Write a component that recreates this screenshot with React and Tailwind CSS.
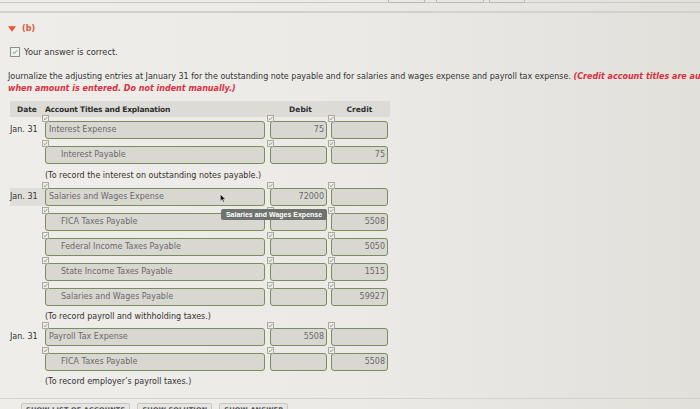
import React from "react";

const rows = [
  { kind: "entry", date: "Jan. 31", account: "Interest Expense", debit: "75" },
  { kind: "entry", account: "Interest Payable", indent: true, credit: "75" },
  { kind: "note", text: "(To record the interest on outstanding notes payable.)", h: "h-[17px]" },
  { kind: "entry", date: "Jan. 31", account: "Salaries and Wages Expense", debit: "72000", hl: true },
  { kind: "entry", account: "FICA Taxes Payable", indent: true, credit: "5508" },
  { kind: "entry", account: "Federal Income Taxes Payable", indent: true, credit: "5050" },
  { kind: "entry", account: "State Income Taxes Payable", indent: true, credit: "1515" },
  { kind: "entry", account: "Salaries and Wages Payable", indent: true, credit: "59927" },
  { kind: "note", text: "(To record payroll and withholding taxes.)", h: "h-[15px]" },
  { kind: "entry", date: "Jan. 31", account: "Payroll Tax Expense", debit: "5508" },
  { kind: "entry", account: "FICA Taxes Payable", indent: true, credit: "5508" },
  { kind: "note", text: "(To record employer\u2019s payroll taxes.)", h: "h-[15px]" },
];

function Tick({ className = "" }) {
  return (
    <span className={`absolute flex h-[7px] w-[7px] items-center justify-center border border-[#a9aba3] bg-[#ecece8] ${className}`}>
      <svg viewBox="0 0 8 8" className="h-[5px] w-[5px]">
        <path d="M1.2 4.2 L3.1 6 L6.8 1.8" fill="none" stroke="#7d8a6a" strokeWidth="1.3" />
      </svg>
    </span>
  );
}

function Field({ width, children, align = "left", indent }) {
  return (
    <div className={`relative h-[18px] ${width}`}>
      <Tick className="-left-[3px] -top-[6px]" />
      <div
        className={`flex h-full items-center rounded-[3px] border-[1.5px] border-[#7b8d5b] bg-[#d8d7d2] text-[#6a6a68] ${
          align === "right" ? "justify-end pr-[2px]" : indent ? "pl-[15px]" : "pl-[3px]"
        }`}
      >
        {children}
      </div>
    </div>
  );
}

export default function App() {
  return (
    <div className="h-[409px] w-[700px] overflow-hidden bg-gradient-to-r from-[#eeede9] via-[#ebeae6] to-[#e1e0db] font-['DejaVu_Sans',sans-serif] text-[8px] text-[#3a3a3a]">
      {/* top chrome */}
      <div className="flex h-[3px] border-b border-[#c9c8c3]">
        <div className="ml-[388px] h-[3px] w-[37px] rounded-b-[2px] border-x border-b border-[#b9b8b3]" />
        <div className="ml-[11px] h-[3px] w-[48px] rounded-b-[2px] border-x border-b border-[#b9b8b3]" />
        <div className="ml-[5px] h-[3px] w-[36px] rounded-b-[2px] border-x border-b border-[#b9b8b3]" />
      </div>
      <div className="h-[10px] border-b-2 border-[#d2d1cc]" />

      {/* part header */}
      <div className="mt-[10px] flex items-center gap-[6px] pl-[8px] text-[8px] font-bold text-[#e0553a]">
        <svg viewBox="0 0 10 7" className="h-[6px] w-[8px]">
          <path d="M0 0 L10 0 L5 7 Z" fill="#e8552f" />
        </svg>
        <span>(b)</span>
      </div>

      {/* correct notice */}
      <div className="mt-[11px] flex items-center gap-[4px] pl-[10px]">
        <span className="flex h-[10px] w-[10px] items-center justify-center border border-[#8d8d8a] bg-[#f2f2ef]">
          <svg viewBox="0 0 8 8" className="h-[6px] w-[6px]">
            <path d="M1.2 4.2 L3.1 6 L6.8 1.8" fill="none" stroke="#6f7d63" strokeWidth="1.2" />
          </svg>
        </span>
        <span className="text-[8.3px] text-[#333]">Your answer is correct.</span>
      </div>

      {/* instructions */}
      <div className="mt-[13px] pl-[8px] leading-[12px] text-[#333]">
        <div className="whitespace-nowrap">
          Journalize the adjusting entries at January 31 for the outstanding note payable and for salaries and wages expense and payroll tax
          expense.{" "}
          <span className="font-bold italic text-[#d8303f]">(Credit account titles are automatically indented</span>
        </div>
        <div className="whitespace-nowrap font-bold italic text-[#d8303f]">when amount is entered. Do not indent manually.)</div>
      </div>

      {/* journal table */}
      <div className="relative ml-[10px] mt-[6px] w-[380px]">
        <div className="flex h-[16px] items-center bg-[#dcdbd6] text-[7.5px] font-bold text-[#2e2e2e]">
          <span className="w-[35px] pl-[7px]">Date</span>
          <span className="w-[225px] tracking-[-0.2px]">Account Titles and Explanation</span>
          <span className="w-[61px] text-center">Debit</span>
          <span className="w-[57px] text-center">Credit</span>
        </div>

        {rows.map((r, i) =>
          r.kind === "note" ? (
            <div key={i} className={`flex ${r.h} items-center pl-[35px] text-[#333]`}>
              {r.text}
            </div>
          ) : (
            <div key={i} className="flex h-[25px] items-start pt-[4px]">
              <div className={`flex h-[18px] w-[35px] items-center text-[#333] ${r.hl ? "bg-[#dfdeda]" : ""}`}>
                {r.date || ""}
              </div>
              <Field width="w-[220px]" indent={r.indent}>
                {r.account}
              </Field>
              <div className="w-[5px]" />
              <Field width="w-[57px]" align="right">
                {r.debit || ""}
              </Field>
              <div className="w-[4px]" />
              <Field width="w-[57px]" align="right">
                {r.credit || ""}
              </Field>
            </div>
          )
        )}

        {/* cursor */}
        <svg viewBox="0 0 8 12" className="absolute left-[210px] top-[93px] h-[9px] w-[6px]">
          <path d="M0.5 0.5 L0.5 9.5 L2.8 7.4 L4.4 11 L5.8 10.4 L4.3 6.9 L7.4 6.9 Z" fill="#111" stroke="#fff" strokeWidth="0.6" />
        </svg>
        {/* tooltip */}
        <div className="absolute left-[211px] top-[108px] flex h-[11px] w-[106px] items-center justify-center rounded-[2px] bg-[#6f726d] font-['Liberation_Sans',sans-serif] text-[7px] font-bold text-white">
          Salaries and Wages Expense
        </div>
      </div>

      {/* buttons */}
      <div className="mt-[9px] flex gap-[7px] border-t border-[#d3d2cd] pl-[21px] pt-[4px]">
        {["SHOW LIST OF ACCOUNTS", "SHOW SOLUTION", "SHOW ANSWER"].map((b) => (
          <div
            key={b}
            className="rounded-[2px] border border-[#c6c5c0] bg-[#e6e5e1] px-[4px] py-[2px] text-[6.5px] font-bold tracking-[0.2px] text-[#4d4d55]"
          >
            {b}
          </div>
        ))}
      </div>
    </div>
  );
}
